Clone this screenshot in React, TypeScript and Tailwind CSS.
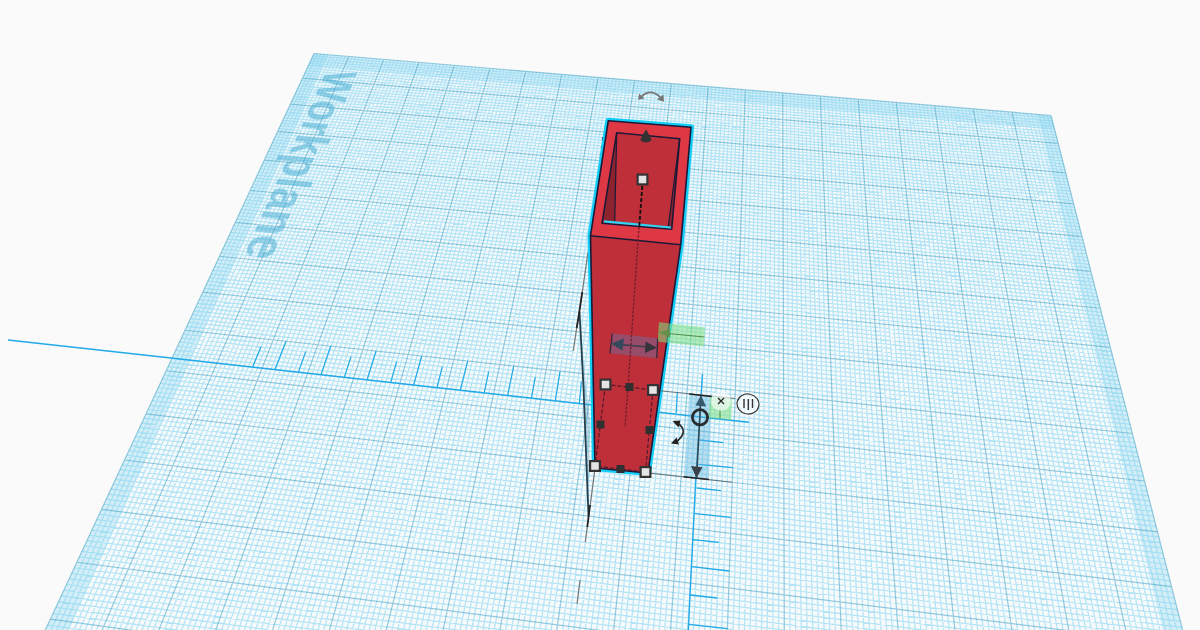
type Pt = [number, number];

/* Camera projection: workplane units (u across, v towards the viewer) to screen. */
const CAM = { a: 33.73, b: -18.79, c: 314, d: 2.756, e: 22.79, f: 53.5, g: -0.00297, h: -0.0241 };
const COLS = 20;
const ROWS = 17;
const UNIT = 40;

function project(u: number, v: number): Pt {
  const w = CAM.g * u + CAM.h * v + 1;
  return [(CAM.a * u + CAM.b * v + CAM.c) / w, (CAM.d * u + CAM.e * v + CAM.f) / w];
}

const fmt = (p: Pt) => p[0].toFixed(2) + " " + p[1].toFixed(2);

function gridPath(step: number, skipMajor: boolean): string {
  const out: string[] = [];
  for (let i = 0; i <= COLS * step; i++) {
    if (skipMajor && i % step === 0) continue;
    out.push(`M${fmt(project(i / step, 0))}L${fmt(project(i / step, ROWS))}`);
  }
  for (let j = 0; j <= ROWS * step; j++) {
    if (skipMajor && j % step === 0) continue;
    out.push(`M${fmt(project(0, j / step))}L${fmt(project(COLS, j / step))}`);
  }
  return out.join("");
}

function band(u0: number, v0: number, u1: number, v1: number): string {
  return `M${fmt(project(u0, v0))}L${fmt(project(u1, v0))}L${fmt(project(u1, v1))}L${fmt(project(u0, v1))}Z`;
}

const PLANE_MATRIX = `matrix3d(${[
  CAM.a / UNIT, CAM.d / UNIT, 0, CAM.g / UNIT,
  CAM.b / UNIT, CAM.e / UNIT, 0, CAM.h / UNIT,
  0, 0, 1, 0,
  CAM.c, CAM.f, 0, 1,
].join(",")})`;

const cornerHandles: Pt[] = [[642.5, 179.5], [605.5, 384.5], [653, 390], [595, 466], [645.5, 472]];
const edgeHandles: Pt[] = [[629.5, 387], [600.5, 424.5], [649.5, 430], [620.5, 469]];

function Workplane() {
  return (
    <svg className="absolute inset-0 h-full w-full" aria-hidden="true">
      <path d={band(0, 0, COLS, ROWS)} fill="#f7fafb" />
      <path d={band(0, 0, 0.4, ROWS)} fill="#8fd8f0" fillOpacity="0.35" />
      <path d={band(COLS - 0.35, 0, COLS, ROWS)} fill="#8fd8f0" fillOpacity="0.35" />
      <path d={band(0, 0, COLS, 0.5)} fill="#8fd8f0" fillOpacity="0.3" />
      <path d={gridPath(10, true)} stroke="#7bd2f0" strokeOpacity="0.55" strokeWidth="1.2" fill="none" />
      <path d={gridPath(1, false)} stroke="#3b9fc4" strokeOpacity="0.52" strokeWidth="1.2" fill="none" />
    </svg>
  );
}

function Ruler() {
  return (
    <g stroke="#22aae8" strokeWidth="1.4" fill="none">
      <path d="M8 340L171 358L299 372.300L590 404.700L749 422.300" />
      <path d="M702.500 374L699.700 417.300L695.700 480L688.300 630" />
      <path
        transform="translate(240 330) scale(0.33333)"
        strokeWidth="3.6"
        d="M38 110L63 50M105 118L138 34M175 127L197 65M243 134L272 48M313 142L333 80M381 150L408 63M452 158L470 95M521 165L545 78M591 173L607 110M661 180L683 94M733 188L746 125M803 196L821 109M874 205L886 141M946 212L960 125M1018 219L1024 155M1309 249L1312 187"
      />
      <path
        transform="translate(660 360) scale(0.33333)"
        strokeWidth="4"
        d="M118 240L190 248M115 313L218 323M110 384L183 392M105 461L213 472M99 539L177 547M95 620L208 633M89 705L172 714M85 793L202 806"
      />
    </g>
  );
}

function Model() {
  return (
    <g strokeLinejoin="round">
      <path d="M579.500 312L584 387L588.500 516L590 420L586 387Z" fill="#4a93b5" fillOpacity="0.35" />
      <path d="M588 252L582.300 292M576.700 328L573.300 351M594.500 472L590 507M587.300 527L585.300 542M580 580L577 604" stroke="#777" strokeWidth="1.2" fill="none" />
      <path d="M579.500 312L583.500 387L588.500 516" stroke="#263f4d" strokeWidth="1.800" fill="none" />
      <path d="M582.300 292L579 314L576.700 328M590 505L587.300 527" stroke="#222" strokeWidth="1.800" fill="none" />
      <path d="M602.500 137V142M601.500 146V149M600.500 153V158" stroke="#333" strokeWidth="1.200" />

      <path d="M608.300 120.700L691 127.300L680.700 244.700L648 473L595 468L590.500 235.700Z" fill="#12cdf7" stroke="#12cdf7" strokeWidth="6" />
      <path d="M608.300 120.700L691 127.300L680.700 244.700L590.500 235.700Z" fill="#df3845" />
      <path d="M590.500 235.700L680.700 244.700L648 473L595 468Z" fill="#be2f3a" />
      <path d="M616.700 132.700L679.700 138.700L671.700 229.300L602 223.300Z" fill="#be2f3a" />
      <path d="M616.700 132.700L614.700 222L603 221Z" fill="#8e2330" />
      <path d="M679.700 138.700L668.300 227L671.700 229Z" fill="#8e2330" />
      <g stroke="#1b1937" strokeWidth="1.600" fill="none">
        <path d="M608.300 120.700L691 127.300L680.700 244.700L648 473L595 468L590.500 235.700Z" />
        <path d="M590.500 235.700L680.700 244.700" />
        <path d="M616.700 132.700L679.700 138.700L671.700 229.300L602 223.300Z" />
        <path d="M616.700 132.700L614.700 221.500M679.700 138.700L668.300 226.500" strokeWidth="1.200" />
      </g>
      <path d="M604 221.300L671 227.500" stroke="#2fd4f7" strokeWidth="2.200" />
    </g>
  );
}

function Dimensions() {
  return (
    <g>
      <path d="M612.300 333.300L657.700 338.300L656.700 358.300L610 353.300Z" fill="#6f6a9a" fillOpacity="0.5" />
      <path d="M659 322.300L705 327.300L704 346.700L658 341.700Z" fill="#7be081" fillOpacity="0.55" />
      <path d="M689.300 394L711.700 396.300L709 479.300L683.700 476.700Z" fill="#5db5de" fillOpacity="0.4" />
      <path d="M710 396.700L732 398.700L731.300 420L708.300 417.700Z" fill="#7be081" fillOpacity="0.55" />

      <path d="M612.300 333.500L610 353.500M657.700 338.500L656.700 358.300" stroke="#33283d" strokeWidth="1.300" />
      <path d="M613 344L655 347.500" stroke="#36404f" strokeWidth="1.300" />
      <path d="M611 343.700L624 338.500L622.500 350.500Z" fill="#344a5c" />
      <path d="M657 347.700L645.500 341.500L645 353Z" fill="#38323c" />

      <path d="M668 333.500L704.500 337" stroke="#558f50" strokeWidth="1.200" />
      <path d="M659.500 323L658.500 341" stroke="#8a9d50" strokeWidth="1" />
      <path d="M659 332.500L670 329V337.500Z" fill="#63914c" />

      <path d="M660 390.700L735 398.500M650 473.300L732 482.300" stroke="#555f64" strokeOpacity="0.8" strokeWidth="1.100" />
      <path d="M689.300 394L711.700 396.500M683.700 476.700L709 479.500" stroke="#222" strokeWidth="1.500" />
      <path d="M701 396L696.500 478" stroke="#34424b" strokeWidth="1.500" />
      <path d="M701 395L695.500 405.500L706 406.500Z" fill="#35596d" />
      <path d="M696.500 478L691 466L702.500 467.300Z" fill="#39424a" />
      <path d="M720 409V418.500" stroke="#5a9c60" strokeWidth="1.200" />
      <circle cx="700" cy="417.300" r="7.600" fill="none" stroke="#292d30" strokeWidth="2.800" />
    </g>
  );
}

function Handles() {
  return (
    <g>
      <path d="M642.300 186L639.300 226" stroke="#111" strokeWidth="1.800" strokeDasharray="4 2" />
      <path d="M639 227L638 241L628.300 383L625 427" stroke="#6f1d2a" strokeWidth="1.300" strokeDasharray="2.500 1.500" fill="none" />
      <path d="M605.500 384.500L653 390L645.500 472L595 466Z" stroke="#54192a" strokeWidth="1.200" strokeDasharray="4 2" fill="none" />
      <path d="M646 129.300L651.500 139C651.500 143.500 640.500 143.500 640.500 139Z" fill="#333" />
      {cornerHandles.map(([x, y]) => (
        <rect key={`${x}-${y}`} x={x - 4.9} y={y - 4.9} width="9.8" height="9.8" fill="#e4e4e4" stroke="#333" strokeWidth="2.2" />
      ))}
      {edgeHandles.map(([x, y]) => (
        <rect key={`${x}-${y}`} x={x - 4} y={y - 4} width="8" height="8" fill="#303030" />
      ))}
      <path d="M641.500 96.500Q651 87.500 661 98" stroke="#777" strokeWidth="1.800" fill="none" />
      <path d="M638 99.800L639 93.800L644.500 98.500ZM664 101.800L657 99.500L663.500 94.500Z" fill="#777" />
      <path d="M677 422.500Q690 431.500 676 442" stroke="#2d2d2d" strokeWidth="1.700" fill="none" />
      <path d="M672.500 421L680.500 420.500L678.500 427.500ZM671 443.500L676.500 437.500L679 444.500Z" fill="#222" />
    </g>
  );
}

export default function App() {
  return (
    <main className="relative h-screen min-h-80 w-full overflow-hidden bg-[#fafafa] font-['Open_Sans',sans-serif]">
      <Workplane />
      <div className="absolute top-0 left-0 h-0 w-0 origin-top-left" style={{ transform: PLANE_MATRIX }}>
        <span className="absolute top-[24px] left-[14px] origin-bottom-left -translate-y-full rotate-90 font-['Liberation_Sans',sans-serif] text-[50px] leading-none font-bold text-[#3fa9cf]/50">
          Workplane
        </span>
      </div>
      <svg className="absolute inset-0 h-full w-full" aria-hidden="true">
        <Ruler />
        <Model />
        <Dimensions />
        <Handles />
      </svg>
      <button aria-label="Dismiss ruler" className="absolute top-[391px] left-[711px] flex size-5 items-center justify-center rounded-full bg-white/60">
        <svg className="size-2" viewBox="0 0 8 8" aria-hidden="true">
          <path d="M1 1L7 7M7 1L1 7" stroke="#222" strokeWidth="1.300" />
        </svg>
      </button>
      <button aria-label="Toggle ruler reference point" className="absolute top-[392px] left-[736px] flex size-6 items-center justify-center rounded-full bg-white/60">
        <svg className="size-6" viewBox="0 0 24 24" aria-hidden="true">
          <ellipse cx="12" cy="12" rx="11" ry="10" fill="none" stroke="#333" strokeWidth="1.200" transform="rotate(12 12 12)" />
          <path d="M8 7V16M12.300 7V18M16.500 7V16" stroke="#333" strokeWidth="1.400" />
        </svg>
      </button>
    </main>
  );
}
